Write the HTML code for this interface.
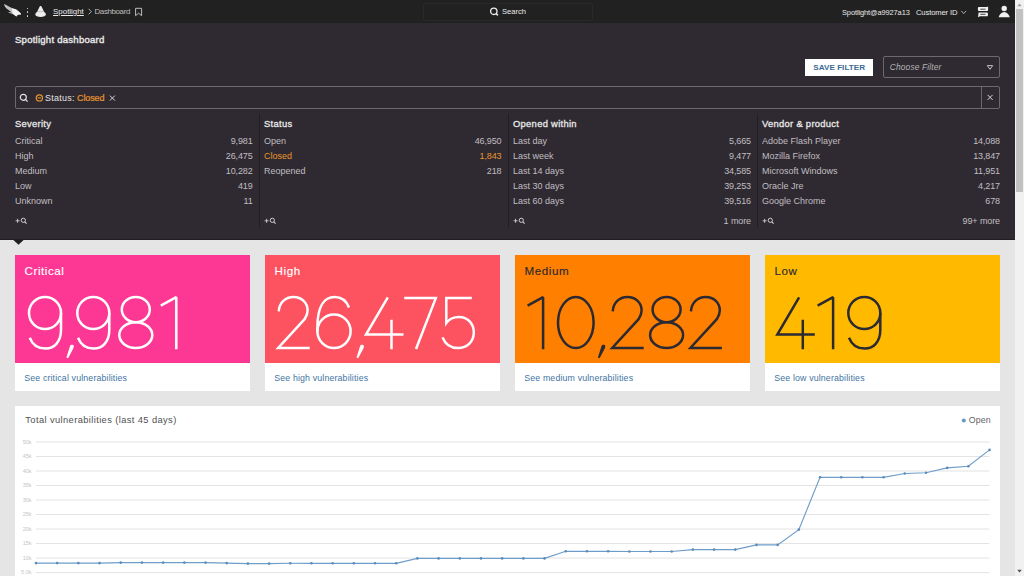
<!DOCTYPE html>
<html><head><meta charset="utf-8">
<style>
*{margin:0;padding:0;box-sizing:border-box}
html,body{width:1024px;height:576px;overflow:hidden;background:#e5e5e5;font-family:"Liberation Sans",sans-serif;position:relative}
.abs{position:absolute}
.t{position:absolute;white-space:nowrap;line-height:1}
</style></head><body>
<div class="abs" style="left:0px;top:0px;width:1015px;height:23px;background:#212121;"></div>
<div class="abs" style="left:0px;top:23px;width:1015px;height:216px;background:#2f2a31;"></div>
<div class="abs" style="left:0px;top:239px;width:1015px;height:1px;background:#1f1d20;"></div>
<svg class="abs" style="left:0;top:238px" width="40" height="10"><path d="M12.8 1.5 L18.5 6.8 L24.2 1.5 Z" fill="#231f24"/></svg>
<div class="abs" style="left:1015px;top:0px;width:9px;height:576px;background:#f1f1f1;"></div>
<div class="abs" style="left:1016px;top:9px;width:7px;height:183px;background:#c1c1c1;"></div>
<svg class="abs" style="left:1015px;top:0" width="9" height="576"><path d="M2.2 6.2 L4.5 3.6 L6.8 6.2Z" fill="#a3a3a3"/><path d="M2.2 569.8 L4.5 572.4 L6.8 569.8Z" fill="#505050"/></svg>
<svg class="abs" style="left:0;top:0" width="24" height="23"><path d="M4 4 C6 5 9 6.5 12 8 L16 9.3 C17 10 18.5 11.5 19.5 12.2 C20.3 12.8 20.9 13.5 21 14.5 C20 14.3 18.8 14.4 18 14.8 C17.3 15.3 16.8 16 16.3 16.6 C15.3 15.8 14.2 14.9 13 14 C11.5 13.6 9.5 13.2 8 12.2 C9.5 12.1 10.8 12.2 11.8 12.4 C9.8 11 7.8 9.6 6.2 8.2 C5 7 4.3 5.6 4 4Z" fill="#c4c4c4"/><path d="M12 8.6 L16 9.6 C17 10.2 18.5 11.6 19.5 12.3 C20.3 12.9 20.9 13.6 21 14.5 C20 14.3 18.8 14.4 18 14.8 C17.3 15.3 16.8 16 16.3 16.6 C15.3 15.8 14.2 14.9 13 14 L12.4 12.4 Z" fill="#f4f4f4"/></svg>
<div class="abs" style="left:26.7px;top:7.6px;width:1.8px;height:1.8px;background:#e4e4e4;border-radius:0.9px"></div>
<div class="abs" style="left:26.7px;top:11.299999999999999px;width:1.8px;height:1.8px;background:#e4e4e4;border-radius:0.9px"></div>
<div class="abs" style="left:26.7px;top:15.0px;width:1.8px;height:1.8px;background:#e4e4e4;border-radius:0.9px"></div>
<svg class="abs" style="left:30px;top:0" width="20" height="23"><path d="M10.6 6 C11.2 6 11.6 6.6 12 7.4 L14 11.8 C15.2 12.7 15.9 13.6 15.9 14.6 C15.9 16.1 13.5 16.9 10.6 16.9 C7.7 16.9 5.3 16.1 5.3 14.6 C5.3 13.6 6 12.7 7.2 11.8 L9.2 7.4 C9.6 6.6 10 6 10.6 6Z" fill="#ececec"/><path d="M8 11.6 H13.2" stroke="#9a9a9a" stroke-width="0.5"/></svg>
<div class="t" style="top:7.91px;left:53.10px;font-size:7.9px;color:#e9e9e9;text-decoration:underline;text-underline-offset:1px">Spotlight</div>
<svg class="abs" style="left:86px;top:0" width="8" height="23"><path d="M2.6 8.8 L5.4 11.6 L2.6 14.4" stroke="#bdbdbd" stroke-width="0.9" fill="none"/></svg>
<div class="t" style="top:7.91px;left:94.50px;font-size:7.9px;color:#bdbdbd;letter-spacing:-0.35px;">Dashboard</div>
<svg class="abs" style="left:134px;top:0" width="10" height="23"><path d="M1.6 8.3 H7.6 V15.7 L4.6 13.2 L1.6 15.7 Z" stroke="#bdbdbd" stroke-width="1" fill="none"/></svg>
<div class="abs" style="left:422.5px;top:2.5px;width:170px;height:18.5px;border:1px solid #2a292a;border-radius:2px;background:#212121"></div>
<svg class="abs" style="left:488px;top:0" width="12" height="23"><circle cx="5.8" cy="11.3" r="3.2" stroke="#ececec" stroke-width="1.3" fill="none"/><path d="M8 13.5 L9.9 15.4" stroke="#ececec" stroke-width="1.5"/></svg>
<div class="t" style="top:8.47px;left:502.00px;font-size:7.6px;color:#e9e9e9;">Search</div>
<div class="t" style="top:8.74px;left:842.00px;font-size:7.4px;color:#e9e9e9;letter-spacing:-0.08px;">Spotlight@a9927a13</div>
<div class="t" style="top:8.57px;left:916.00px;font-size:7.6px;color:#e9e9e9;letter-spacing:-0.12px;">Customer ID</div>
<svg class="abs" style="left:958px;top:0" width="12" height="23"><path d="M3.3 10.9 L5.7 13.6 L8.1 10.9" stroke="#bdbdbd" stroke-width="0.9" fill="none"/></svg>
<svg class="abs" style="left:975px;top:0" width="16" height="23"><path d="M3.6 7.1 H12.3 L13.1 6.3 V10.3 C13.1 10.7 12.8 10.9 12.3 10.9 H3.6 C2.6 10.9 2.6 7.1 3.6 7.1Z" fill="#f0f0f0"/><path d="M3.6 12.4 H12.2 C13.2 12.4 13.2 16.2 12.2 16.2 H5 L3 17.2 Z" fill="#f0f0f0"/><path d="M5.3 9.2 H10.5 M5.3 14.3 H10.5" stroke="#212121" stroke-width="0.8"/></svg>
<svg class="abs" style="left:996px;top:0" width="16" height="23"><circle cx="8.2" cy="8.5" r="2.7" fill="#f0f0f0"/><path d="M2.6 17.3 C3.6 14.2 5.8 12.1 8.2 12.1 C10.6 12.1 12.8 14.2 13.8 17.3 Z" fill="#f0f0f0"/></svg>
<div class="t" style="top:35.47px;left:15.00px;font-size:9.6px;color:#eaeaea;letter-spacing:0.22px;-webkit-text-stroke:0.35px #eaeaea;">Spotlight dashboard</div>
<div class="abs" style="left:805px;top:58.5px;width:68px;height:17.5px;background:#ffffff;"></div>
<div class="t" style="top:63.94px;left:813.20px;font-size:8.1px;color:#3b6b94;font-weight:bold;letter-spacing:0.05px;">SAVE FILTER</div>
<div class="abs" style="left:882.5px;top:56px;width:117.5px;height:22px;border:1px solid #6b696c;border-radius:2px"></div>
<div class="t" style="top:63.49px;left:889.80px;font-size:8.4px;color:#b4b4b4;letter-spacing:0.15px;font-style:italic;">Choose Filter</div>
<svg class="abs" style="left:985px;top:60px" width="10" height="14"><path d="M2.3 5.6 H7.7 L5 9.3 Z" stroke="#cfcfcf" stroke-width="0.9" fill="none" stroke-linejoin="round"/></svg>
<div class="abs" style="left:14.5px;top:86px;width:985.5px;height:23px;border:1px solid #6b696c;border-radius:2px"></div>
<div class="abs" style="left:980.5px;top:87px;width:1px;height:21.5px;background:#6b696c;"></div>
<svg class="abs" style="left:985px;top:90px" width="12" height="16"><path d="M2.6 4.9 L7.6 9.9 M7.6 4.9 L2.6 9.9" stroke="#d9d9d9" stroke-width="1"/></svg>
<svg class="abs" style="left:17px;top:90px" width="14" height="16"><circle cx="6.3" cy="7.3" r="3" stroke="#e0e0e0" stroke-width="1.2" fill="none"/><path d="M8.4 9.4 L10.6 11.6" stroke="#e0e0e0" stroke-width="1.3"/></svg>
<svg class="abs" style="left:34px;top:92px" width="12" height="12"><circle cx="5.4" cy="5.9" r="3.1" stroke="#e8952f" stroke-width="1.2" fill="none"/><path d="M3.7 5.9 H7.1" stroke="#e8952f" stroke-width="1.1"/></svg>
<div class="t" style="top:93.58px;left:45.00px;font-size:9px;color:#e3e3e3;letter-spacing:0.25px;">Status:</div>
<div class="t" style="top:93.58px;left:77.00px;font-size:9px;color:#e8952f;letter-spacing:-0.1px;-webkit-text-stroke:0.2px #e8952f;">Closed</div>
<svg class="abs" style="left:107px;top:92px" width="10" height="12"><path d="M2.9 3.6 L7.9 8.6 M7.9 3.6 L2.9 8.6" stroke="#d9d9d9" stroke-width="1"/></svg>
<div class="t" style="top:119.04px;left:15.00px;font-size:9.4px;color:#e8e8e8;letter-spacing:0.3px;-webkit-text-stroke:0.3px #e8e8e8;">Severity</div>
<div class="t" style="top:136.58px;left:15.00px;font-size:9px;color:#c0bec1;">Critical</div>
<div class="t" style="top:136.58px;right:771.40px;font-size:9px;color:#c0bec1;letter-spacing:-0.12px;">9,981</div>
<div class="t" style="top:151.58px;left:15.00px;font-size:9px;color:#c0bec1;">High</div>
<div class="t" style="top:151.58px;right:771.40px;font-size:9px;color:#c0bec1;letter-spacing:-0.12px;">26,475</div>
<div class="t" style="top:166.58px;left:15.00px;font-size:9px;color:#c0bec1;">Medium</div>
<div class="t" style="top:166.58px;right:771.40px;font-size:9px;color:#c0bec1;letter-spacing:-0.12px;">10,282</div>
<div class="t" style="top:181.58px;left:15.00px;font-size:9px;color:#c0bec1;">Low</div>
<div class="t" style="top:181.58px;right:771.40px;font-size:9px;color:#c0bec1;letter-spacing:-0.12px;">419</div>
<div class="t" style="top:196.58px;left:15.00px;font-size:9px;color:#c0bec1;">Unknown</div>
<div class="t" style="top:196.58px;right:771.40px;font-size:9px;color:#c0bec1;letter-spacing:-0.12px;">11</div>
<svg class="abs" style="left:14px;top:214px" width="16" height="12"><path d="M1.6 6.8 H5.6 M3.6 4.8 V8.8" stroke="#cfcfcf" stroke-width="0.9"/><circle cx="9.3" cy="6.3" r="2.1" stroke="#cfcfcf" stroke-width="1" fill="none"/><path d="M10.8 7.8 L12.6 9.6" stroke="#cfcfcf" stroke-width="1.1"/></svg>
<div class="abs" style="left:258.6px;top:114px;width:1px;height:113.5px;background:#221f23;"></div>
<div class="t" style="top:119.04px;left:264.00px;font-size:9.4px;color:#e8e8e8;letter-spacing:0.3px;-webkit-text-stroke:0.3px #e8e8e8;">Status</div>
<div class="t" style="top:136.58px;left:264.00px;font-size:9px;color:#c0bec1;">Open</div>
<div class="t" style="top:136.58px;right:522.50px;font-size:9px;color:#c0bec1;letter-spacing:-0.12px;">46,950</div>
<div class="t" style="top:151.58px;left:264.00px;font-size:9px;color:#e8952f;">Closed</div>
<div class="t" style="top:151.58px;right:522.50px;font-size:9px;color:#e8952f;letter-spacing:-0.12px;">1,843</div>
<div class="t" style="top:166.58px;left:264.00px;font-size:9px;color:#c0bec1;">Reopened</div>
<div class="t" style="top:166.58px;right:522.50px;font-size:9px;color:#c0bec1;letter-spacing:-0.12px;">218</div>
<svg class="abs" style="left:263px;top:214px" width="16" height="12"><path d="M1.6 6.8 H5.6 M3.6 4.8 V8.8" stroke="#cfcfcf" stroke-width="0.9"/><circle cx="9.3" cy="6.3" r="2.1" stroke="#cfcfcf" stroke-width="1" fill="none"/><path d="M10.8 7.8 L12.6 9.6" stroke="#cfcfcf" stroke-width="1.1"/></svg>
<div class="abs" style="left:507.5px;top:114px;width:1px;height:113.5px;background:#221f23;"></div>
<div class="t" style="top:119.04px;left:513.00px;font-size:9.4px;color:#e8e8e8;letter-spacing:0.3px;-webkit-text-stroke:0.3px #e8e8e8;">Opened within</div>
<div class="t" style="top:136.58px;left:513.00px;font-size:9px;color:#c0bec1;">Last day</div>
<div class="t" style="top:136.58px;right:273.00px;font-size:9px;color:#c0bec1;letter-spacing:-0.12px;">5,665</div>
<div class="t" style="top:151.58px;left:513.00px;font-size:9px;color:#c0bec1;">Last week</div>
<div class="t" style="top:151.58px;right:273.00px;font-size:9px;color:#c0bec1;letter-spacing:-0.12px;">9,477</div>
<div class="t" style="top:166.58px;left:513.00px;font-size:9px;color:#c0bec1;">Last 14 days</div>
<div class="t" style="top:166.58px;right:273.00px;font-size:9px;color:#c0bec1;letter-spacing:-0.12px;">34,585</div>
<div class="t" style="top:181.58px;left:513.00px;font-size:9px;color:#c0bec1;">Last 30 days</div>
<div class="t" style="top:181.58px;right:273.00px;font-size:9px;color:#c0bec1;letter-spacing:-0.12px;">39,253</div>
<div class="t" style="top:196.58px;left:513.00px;font-size:9px;color:#c0bec1;">Last 60 days</div>
<div class="t" style="top:196.58px;right:273.00px;font-size:9px;color:#c0bec1;letter-spacing:-0.12px;">39,516</div>
<svg class="abs" style="left:512px;top:214px" width="16" height="12"><path d="M1.6 6.8 H5.6 M3.6 4.8 V8.8" stroke="#cfcfcf" stroke-width="0.9"/><circle cx="9.3" cy="6.3" r="2.1" stroke="#cfcfcf" stroke-width="1" fill="none"/><path d="M10.8 7.8 L12.6 9.6" stroke="#cfcfcf" stroke-width="1.1"/></svg>
<div class="t" style="top:216.58px;right:273.00px;font-size:9px;color:#c0bec1;letter-spacing:-0.1px;">1 more</div>
<div class="abs" style="left:757px;top:114px;width:1px;height:113.5px;background:#221f23;"></div>
<div class="t" style="top:119.04px;left:762.00px;font-size:9.4px;color:#e8e8e8;letter-spacing:0.3px;-webkit-text-stroke:0.3px #e8e8e8;">Vendor &amp; product</div>
<div class="t" style="top:136.58px;left:762.00px;font-size:9px;color:#c0bec1;">Adobe Flash Player</div>
<div class="t" style="top:136.58px;right:24.00px;font-size:9px;color:#c0bec1;letter-spacing:-0.12px;">14,088</div>
<div class="t" style="top:151.58px;left:762.00px;font-size:9px;color:#c0bec1;">Mozilla Firefox</div>
<div class="t" style="top:151.58px;right:24.00px;font-size:9px;color:#c0bec1;letter-spacing:-0.12px;">13,847</div>
<div class="t" style="top:166.58px;left:762.00px;font-size:9px;color:#c0bec1;">Microsoft Windows</div>
<div class="t" style="top:166.58px;right:24.00px;font-size:9px;color:#c0bec1;letter-spacing:-0.12px;">11,951</div>
<div class="t" style="top:181.58px;left:762.00px;font-size:9px;color:#c0bec1;">Oracle Jre</div>
<div class="t" style="top:181.58px;right:24.00px;font-size:9px;color:#c0bec1;letter-spacing:-0.12px;">4,217</div>
<div class="t" style="top:196.58px;left:762.00px;font-size:9px;color:#c0bec1;">Google Chrome</div>
<div class="t" style="top:196.58px;right:24.00px;font-size:9px;color:#c0bec1;letter-spacing:-0.12px;">678</div>
<svg class="abs" style="left:761px;top:214px" width="16" height="12"><path d="M1.6 6.8 H5.6 M3.6 4.8 V8.8" stroke="#cfcfcf" stroke-width="0.9"/><circle cx="9.3" cy="6.3" r="2.1" stroke="#cfcfcf" stroke-width="1" fill="none"/><path d="M10.8 7.8 L12.6 9.6" stroke="#cfcfcf" stroke-width="1.1"/></svg>
<div class="t" style="top:216.58px;right:24.00px;font-size:9px;color:#c0bec1;letter-spacing:-0.1px;">99+ more</div>
<div class="abs" style="left:15px;top:255px;width:235px;height:108px;background:#fc3894;"></div>
<div class="abs" style="left:15px;top:363px;width:235px;height:28px;background:#ffffff;"></div>
<div class="t" style="top:265.38px;left:24.60px;font-size:11.6px;color:#ffffff;letter-spacing:0.55px;-webkit-text-stroke:0.15px #ffffff;">Critical</div>
<div class="t" style="top:373.95px;left:24.20px;font-size:8.8px;color:#3f74a2;letter-spacing:0.15px;">See critical vulnerabilities</div>
<div class="abs" style="left:265px;top:255px;width:235px;height:108px;background:#fd5361;"></div>
<div class="abs" style="left:265px;top:363px;width:235px;height:28px;background:#ffffff;"></div>
<div class="t" style="top:265.38px;left:274.60px;font-size:11.6px;color:#ffffff;letter-spacing:0.55px;-webkit-text-stroke:0.15px #ffffff;">High</div>
<div class="t" style="top:373.95px;left:274.20px;font-size:8.8px;color:#3f74a2;letter-spacing:0.15px;">See high vulnerabilities</div>
<div class="abs" style="left:515px;top:255px;width:235px;height:108px;background:#ff7f00;"></div>
<div class="abs" style="left:515px;top:363px;width:235px;height:28px;background:#ffffff;"></div>
<div class="t" style="top:265.38px;left:524.60px;font-size:11.6px;color:#2b2a33;letter-spacing:0.55px;-webkit-text-stroke:0.15px #2b2a33;">Medium</div>
<div class="t" style="top:373.95px;left:524.20px;font-size:8.8px;color:#3f74a2;letter-spacing:0.15px;">See medium vulnerabilities</div>
<div class="abs" style="left:765px;top:255px;width:235px;height:108px;background:#ffba00;"></div>
<div class="abs" style="left:765px;top:363px;width:235px;height:28px;background:#ffffff;"></div>
<div class="t" style="top:265.38px;left:774.60px;font-size:11.6px;color:#2b2a33;letter-spacing:0.55px;-webkit-text-stroke:0.15px #2b2a33;">Low</div>
<div class="t" style="top:373.95px;left:774.20px;font-size:8.8px;color:#3f74a2;letter-spacing:0.15px;">See low vulnerabilities</div>
<svg class="abs" style="left:15px;top:297.3px;overflow:visible" width="235" height="60"><g transform="translate(-15,0)" fill="none" stroke="#ffffff" stroke-width="2.5" style="color:#ffffff"><g transform="translate(28.50,0)"><ellipse cx="16.5" cy="16" rx="16" ry="16"/><path d="M32.5 16 V33 C32.5 44.5 26 51.6 17 51.6 C10 51.6 4 48 1.2 40.8"/></g><g transform="translate(64.50,47.00)"><path d="M5.7 1.6 C6.2 0.2 9.2 0.3 9.3 2 C9.4 3 9 4.2 8.4 5.3 L3.6 14.3 L1.9 13.5 Z" fill="currentColor" stroke="none"/></g><g transform="translate(76.80,0)"><ellipse cx="16.5" cy="16" rx="16" ry="16"/><path d="M32.5 16 V33 C32.5 44.5 26 51.6 17 51.6 C10 51.6 4 48 1.2 40.8"/></g><g transform="translate(119.00,0)"><ellipse cx="16.8" cy="12.6" rx="14" ry="12.6"/><ellipse cx="16.8" cy="38.1" rx="16.5" ry="12.9"/></g><g transform="translate(160.00,0)"><path d="M0.8 8.6 L16.3 0.2 V52.2" stroke-linejoin="bevel"/></g></g></svg>
<svg class="abs" style="left:265px;top:297.3px;overflow:visible" width="235" height="60"><g transform="translate(-265,0)" fill="none" stroke="#ffffff" stroke-width="2.5" style="color:#ffffff"><g transform="translate(277.40,0)"><path d="M1.4 14.4 C1.8 5.8 8 0 16 0 C24.3 0 30.2 5.8 30.2 13.5 C30.2 17.2 29 19.6 27.2 22.2 L0.8 51 H32.3"/></g><g transform="translate(317.00,0)"><ellipse cx="17" cy="34.3" rx="16.6" ry="16.7"/><path d="M32 10.5 C29.5 4 24.5 0 17.5 0 C7.5 0 0.4 9 0.4 30 V35"/></g><g transform="translate(354.60,47.00)"><path d="M5.7 1.6 C6.2 0.2 9.2 0.3 9.3 2 C9.4 3 9 4.2 8.4 5.3 L3.6 14.3 L1.9 13.5 Z" fill="currentColor" stroke="none"/></g><g transform="translate(366.00,0)"><path d="M21.8 0.3 L0 37.5 H37.5 M25.5 22.8 V52.3"/></g><g transform="translate(404.20,0)"><path d="M0 1.1 H31.6 L11.8 52"/></g><g transform="translate(442.20,0)"><path d="M29.6 0.9 H4.1 V26 C7 22 11.5 20 16.8 20 C25.5 20 31.6 26.5 31.6 35.5 C31.6 44.5 25 51 16 51 C9 51 3 47.5 0.4 40.3"/></g></g></svg>
<svg class="abs" style="left:515px;top:297.3px;overflow:visible" width="235" height="60"><g transform="translate(-515,0)" fill="none" stroke="#2b2a33" stroke-width="2.5" style="color:#2b2a33"><g transform="translate(526.80,0)"><path d="M0.8 8.6 L16.3 0.2 V52.2" stroke-linejoin="bevel"/></g><g transform="translate(556.90,0)"><ellipse cx="18.9" cy="25.5" rx="17.8" ry="25.6"/></g><g transform="translate(596.00,47.00)"><path d="M5.7 1.6 C6.2 0.2 9.2 0.3 9.3 2 C9.4 3 9 4.2 8.4 5.3 L3.6 14.3 L1.9 13.5 Z" fill="currentColor" stroke="none"/></g><g transform="translate(611.40,0)"><path d="M1.4 14.4 C1.8 5.8 8 0 16 0 C24.3 0 30.2 5.8 30.2 13.5 C30.2 17.2 29 19.6 27.2 22.2 L0.8 51 H32.3"/></g><g transform="translate(649.80,0)"><ellipse cx="16.8" cy="12.6" rx="14" ry="12.6"/><ellipse cx="16.8" cy="38.1" rx="16.5" ry="12.9"/></g><g transform="translate(689.60,0)"><path d="M1.4 14.4 C1.8 5.8 8 0 16 0 C24.3 0 30.2 5.8 30.2 13.5 C30.2 17.2 29 19.6 27.2 22.2 L0.8 51 H32.3"/></g></g></svg>
<svg class="abs" style="left:765px;top:297.3px;overflow:visible" width="235" height="60"><g transform="translate(-765,0)" fill="none" stroke="#2b2a33" stroke-width="2.5" style="color:#2b2a33"><g transform="translate(777.30,0)"><path d="M21.8 0.3 L0 37.5 H37.5 M25.5 22.8 V52.3"/></g><g transform="translate(816.80,0)"><path d="M0.8 8.6 L16.3 0.2 V52.2" stroke-linejoin="bevel"/></g><g transform="translate(847.80,0)"><ellipse cx="16.5" cy="16" rx="16" ry="16"/><path d="M32.5 16 V33 C32.5 44.5 26 51.6 17 51.6 C10 51.6 4 48 1.2 40.8"/></g></g></svg>
<div class="abs" style="left:15px;top:406px;width:985px;height:176px;background:#ffffff;"></div>
<div class="t" style="top:416.13px;left:25.30px;font-size:9.3px;color:#505050;letter-spacing:0.4px;">Total vulnerabilities (last 45 days)</div>
<svg class="abs" style="left:960px;top:416px" width="8" height="9"><circle cx="3.8" cy="4.5" r="2.1" fill="#6a9ac6"/></svg>
<div class="t" style="top:416.15px;left:968.70px;font-size:8.8px;color:#626262;letter-spacing:0.15px;">Open</div>
<svg class="abs" style="left:0;top:0" width="1015" height="576"><path d="M36 442.00 H989.6" stroke="#e3e3e3" stroke-width="1"/><path d="M36 456.51 H989.6" stroke="#e3e3e3" stroke-width="1"/><path d="M36 471.02 H989.6" stroke="#e3e3e3" stroke-width="1"/><path d="M36 485.53 H989.6" stroke="#e3e3e3" stroke-width="1"/><path d="M36 500.04 H989.6" stroke="#e3e3e3" stroke-width="1"/><path d="M36 514.55 H989.6" stroke="#e3e3e3" stroke-width="1"/><path d="M36 529.06 H989.6" stroke="#e3e3e3" stroke-width="1"/><path d="M36 543.57 H989.6" stroke="#e3e3e3" stroke-width="1"/><path d="M36 558.08 H989.6" stroke="#e3e3e3" stroke-width="1"/><path d="M36 572.59 H989.6" stroke="#e3e3e3" stroke-width="1"/></svg>
<div class="t" style="top:439.54px;right:992.50px;font-size:5.5px;color:#c4c4c4;">50k</div>
<div class="t" style="top:454.05px;right:992.50px;font-size:5.5px;color:#c4c4c4;">45k</div>
<div class="t" style="top:468.56px;right:992.50px;font-size:5.5px;color:#c4c4c4;">40k</div>
<div class="t" style="top:483.07px;right:992.50px;font-size:5.5px;color:#c4c4c4;">35k</div>
<div class="t" style="top:497.58px;right:992.50px;font-size:5.5px;color:#c4c4c4;">30k</div>
<div class="t" style="top:512.09px;right:992.50px;font-size:5.5px;color:#c4c4c4;">25k</div>
<div class="t" style="top:526.60px;right:992.50px;font-size:5.5px;color:#c4c4c4;">20k</div>
<div class="t" style="top:541.11px;right:992.50px;font-size:5.5px;color:#c4c4c4;">15k</div>
<div class="t" style="top:555.62px;right:992.50px;font-size:5.5px;color:#c4c4c4;">10k</div>
<div class="t" style="top:570.13px;right:992.50px;font-size:5.5px;color:#c4c4c4;">5.0k</div>
<svg class="abs" style="left:0;top:0" width="1015" height="576"><path d="M36.00 563.10 L57.19 563.10 L78.38 563.10 L99.57 563.10 L120.76 562.60 L141.95 562.60 L163.14 562.60 L184.33 562.60 L205.52 562.60 L226.71 563.10 L247.90 563.60 L269.09 563.60 L290.28 563.30 L311.47 563.30 L332.66 563.30 L353.85 563.30 L375.04 563.30 L396.23 563.30 L417.42 558.40 L438.61 558.40 L459.80 558.40 L480.99 558.40 L502.18 558.40 L523.37 558.40 L544.56 558.40 L565.75 551.30 L586.94 551.30 L608.13 551.30 L629.32 551.50 L650.51 551.50 L671.70 551.50 L692.89 549.60 L714.08 549.60 L735.27 549.60 L756.46 544.90 L777.65 544.90 L798.84 529.60 L820.03 477.30 L841.22 477.30 L862.41 477.30 L883.60 477.30 L904.79 473.50 L925.98 472.80 L947.17 467.90 L968.36 466.20 L989.55 449.90" stroke="#6e9dca" stroke-width="1.15" fill="none"/><g fill="#5a8cbb"><circle cx="36.00" cy="563.10" r="1.3"/><circle cx="57.19" cy="563.10" r="1.3"/><circle cx="78.38" cy="563.10" r="1.3"/><circle cx="99.57" cy="563.10" r="1.3"/><circle cx="120.76" cy="562.60" r="1.3"/><circle cx="141.95" cy="562.60" r="1.3"/><circle cx="163.14" cy="562.60" r="1.3"/><circle cx="184.33" cy="562.60" r="1.3"/><circle cx="205.52" cy="562.60" r="1.3"/><circle cx="226.71" cy="563.10" r="1.3"/><circle cx="247.90" cy="563.60" r="1.3"/><circle cx="269.09" cy="563.60" r="1.3"/><circle cx="290.28" cy="563.30" r="1.3"/><circle cx="311.47" cy="563.30" r="1.3"/><circle cx="332.66" cy="563.30" r="1.3"/><circle cx="353.85" cy="563.30" r="1.3"/><circle cx="375.04" cy="563.30" r="1.3"/><circle cx="396.23" cy="563.30" r="1.3"/><circle cx="417.42" cy="558.40" r="1.3"/><circle cx="438.61" cy="558.40" r="1.3"/><circle cx="459.80" cy="558.40" r="1.3"/><circle cx="480.99" cy="558.40" r="1.3"/><circle cx="502.18" cy="558.40" r="1.3"/><circle cx="523.37" cy="558.40" r="1.3"/><circle cx="544.56" cy="558.40" r="1.3"/><circle cx="565.75" cy="551.30" r="1.3"/><circle cx="586.94" cy="551.30" r="1.3"/><circle cx="608.13" cy="551.30" r="1.3"/><circle cx="629.32" cy="551.50" r="1.3"/><circle cx="650.51" cy="551.50" r="1.3"/><circle cx="671.70" cy="551.50" r="1.3"/><circle cx="692.89" cy="549.60" r="1.3"/><circle cx="714.08" cy="549.60" r="1.3"/><circle cx="735.27" cy="549.60" r="1.3"/><circle cx="756.46" cy="544.90" r="1.3"/><circle cx="777.65" cy="544.90" r="1.3"/><circle cx="798.84" cy="529.60" r="1.3"/><circle cx="820.03" cy="477.30" r="1.3"/><circle cx="841.22" cy="477.30" r="1.3"/><circle cx="862.41" cy="477.30" r="1.3"/><circle cx="883.60" cy="477.30" r="1.3"/><circle cx="904.79" cy="473.50" r="1.3"/><circle cx="925.98" cy="472.80" r="1.3"/><circle cx="947.17" cy="467.90" r="1.3"/><circle cx="968.36" cy="466.20" r="1.3"/><circle cx="989.55" cy="449.90" r="1.3"/></g></svg>
</body></html>
